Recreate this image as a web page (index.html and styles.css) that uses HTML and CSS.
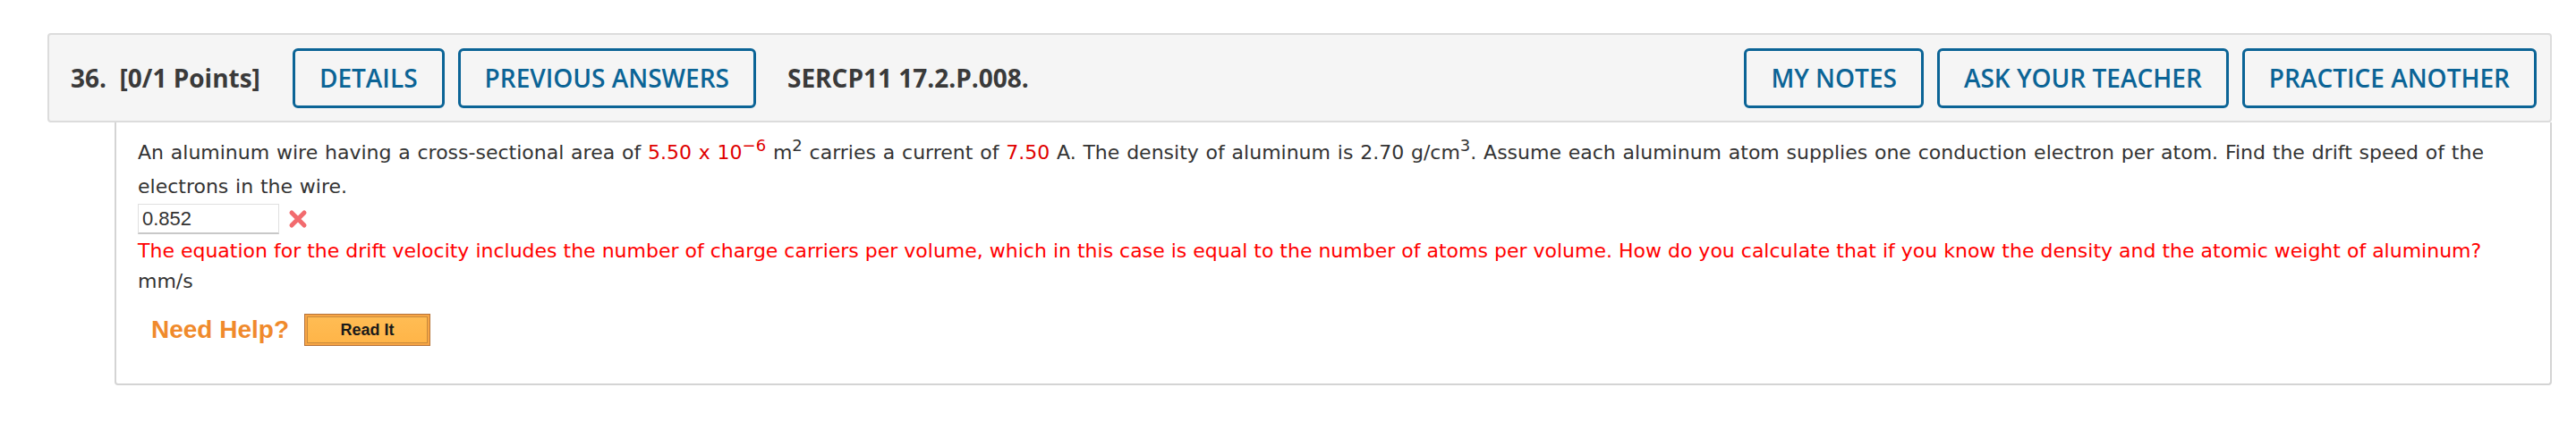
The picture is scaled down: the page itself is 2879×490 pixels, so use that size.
FILE: index.html
```html
<!DOCTYPE html>
<html lang="en">
<head>
  <meta charset="UTF-8">
  <title>Question 36</title>
  <link rel="stylesheet" href="styles.css">
</head>
<body>
  <div class="question">
    <div class="qhead">
      <span class="qnum">36.  [0/1 Points]</span>
      <div class="btns">
        <button class="qbtn">DETAILS</button>
        <button class="qbtn">PREVIOUS ANSWERS</button>
      </div>
      <span class="qcode">SERCP11 17.2.P.008.</span>
      <div class="btns right">
        <button class="qbtn">MY NOTES</button>
        <button class="qbtn">ASK YOUR TEACHER</button>
        <button class="qbtn">PRACTICE ANOTHER</button>
      </div>
    </div>

    <div class="qbody">
      <p class="prompt">An aluminum wire having a cross-sectional area of <span class="val">5.50 x 10<sup>&minus;6</sup></span> m<sup>2</sup> carries a current of <span class="val">7.50</span> A. The density of aluminum is 2.70 g/cm<sup>3</sup>. Assume each aluminum atom supplies one conduction electron per atom. Find the drift speed of the <span>electrons in the wire.</span></p>

      <div class="answer">
        <input class="ans-input" type="text" value="0.852">
        <svg class="wrong" width="22" height="22" viewBox="0 0 22 22">
          <path d="M4 4 L18 18 M18 4 L4 18" stroke="#f26b6e" stroke-width="5" stroke-linecap="round"/>
        </svg>
      </div>
      <p class="feedback">The equation for the drift velocity includes the number of charge carriers per volume, which in this case is equal to the number of atoms per volume. How do you calculate that if you know the density and the atomic weight of aluminum?</p>
      <p class="unit">mm/s</p>

      <div class="help">
        <span class="help-label">Need Help?</span>
        <button class="readit">Read It</button>
      </div>
    </div>
  </div>
</body>
</html>
```

FILE: styles.css
```css
body {
  margin: 0;
  background: #fff;
  font-family: 'DejaVu Sans', Verdana, sans-serif;
  color: #333;
}
.question {
  padding: 37px 27px 0 53px;
}
.qhead {
  display: flex;
  align-items: center;
  background-color: #f5f5f5;
  border: 2px solid #dcdcdc;
  border-radius: 4px;
  height: 96px;
  padding: 0 15px 0 24px;
  font-family: 'Open Sans', sans-serif;
}
.qnum {
  white-space: pre;
  font-weight: 700;
  font-size: 28px;
  color: #3a3a3a;
  margin-right: 36px;
}
.qcode {
  font-weight: 700;
  font-size: 28px;
  color: #3a3a3a;
  margin-left: 35px;
}
.btns {
  display: flex;
  gap: 15px;
}
.btns.right {
  margin-left: auto;
}
.qbtn {
  height: 67px;
  padding: 0 27px;
  border: 3px solid #0b6496;
  border-radius: 6px;
  background: transparent;
  color: #0b6496;
  font-family: 'Open Sans', sans-serif;
  font-weight: 600;
  font-size: 28px;
}
.qbody {
  margin-left: 75px;
  border: 2px solid #d4d4d4;
  border-top: none;
  border-radius: 0 0 4px 4px;
  padding: 15px 24px 42px 24px;
  font-size: 22px;
  line-height: 34px;
}
.qbody p {
  margin: 0;
}
.qbody .prompt {
  line-height: 38px;
  word-spacing: 0.8px;
}
.val {
  color: #e00000;
}
sup {
  font-size: 18px;
  vertical-align: 9px;
  line-height: 1;
}
.answer {
  display: flex;
  align-items: center;
  gap: 10px;
  margin-bottom: 2px;
}
.ans-input {
  width: 158px;
  height: 34px;
  box-sizing: border-box;
  margin: 0;
  padding: 0 4px;
  border: 1px solid #e0e0e0;
  border-bottom: 2px solid #c8c8c8;
  font-family: 'Liberation Sans', Arial, sans-serif;
  font-size: 22px;
  color: #333;
}
.feedback {
  color: #ff0000;
}
.help {
  display: flex;
  align-items: center;
  margin-top: 19px;
  padding-left: 15px;
}
.help-label {
  font-family: 'Liberation Sans', Arial, sans-serif;
  font-weight: 700;
  font-size: 28px;
  color: #f08a2c;
  margin-right: 17px;
}
.readit {
  width: 141px;
  height: 36px;
  border: 1px solid #b5733a;
  box-shadow: inset 0 0 0 2px #f7a544, inset 0 0 0 3px #c98a3c;
  background: linear-gradient(#ffbd55, #ffb447);
  font-family: 'Liberation Sans', Arial, sans-serif;
  font-weight: 700;
  font-size: 18px;
  color: #1a1a1a;
}
```
